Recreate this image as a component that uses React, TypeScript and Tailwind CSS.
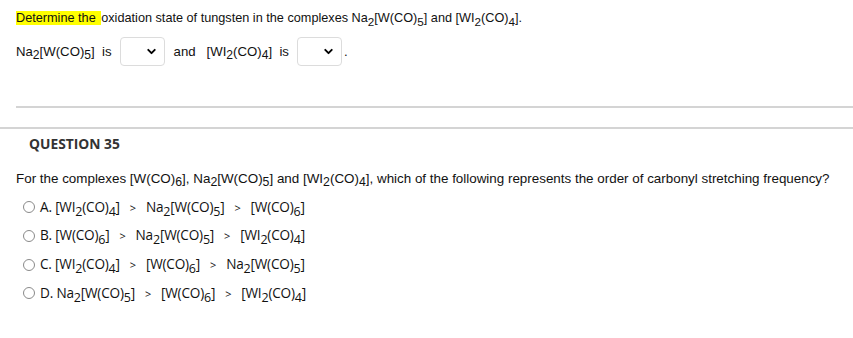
import type { ReactNode } from 'react';
import { ChevronDown } from 'lucide-react';

const arial = { fontFamily: '"Liberation Sans", Arial, sans-serif' };
const open = { fontFamily: '"Open Sans", sans-serif' };

function S({ children }: { children: ReactNode }) {
  return <span className="relative top-[0.3em] text-[0.92em]">{children}</span>;
}

function Sel() {
  return (
    <span className="ml-[8px] mr-[9px] inline-flex h-[29px] w-[45px] items-center justify-end rounded-[4px] border border-[#dcdcdc] bg-white pr-[6px] align-middle">
      <ChevronDown size={13} strokeWidth={3.5} className="text-black" />
    </span>
  );
}

const wi2 = <>[WI<S>2</S>(CO)<S>4</S>]</>;
const na2 = <>Na<S>2</S>[W(CO)<S>5</S>]</>;
const wco6 = <>[W(CO)<S>6</S>]</>;

const options = [
  ['A.', wi2, na2, wco6],
  ['B.', wco6, na2, wi2],
  ['C.', wi2, wco6, na2],
  ['D.', na2, wco6, wi2],
] as const;

export default function App() {
  return (
    <div className="h-[338px] w-[853px] overflow-hidden bg-white text-[#111]">
      <div className="pl-4 pt-[9px] text-[13.2px]" style={arial}>
        <p className="text-[12.7px] leading-[17px]">
          <span className="bg-[#ffff00] pr-[2px]">Determine the </span>oxidation state of tungsten in the complexes Na<S>2</S>[W(CO)<S>5</S>] and [WI<S>2</S>(CO)<S>4</S>].
        </p>
        <p className="mt-[10px] flex items-center whitespace-pre">
          <span>Na<S>2</S>[W(CO)<S>5</S>]  is</span>
          <Sel />
          <span>and   [WI<S>2</S>(CO)<S>4</S>]  is</span>
          <Sel />
          <span className="-ml-[7px]">.</span>
        </p>
      </div>
      <div className="ml-4 mt-[40px] h-[2px] bg-[#d4d4d4]" />
      <div className="mt-[19px] h-[2px] bg-[#d4d4d4]" />
      <div className="pl-[29px] pt-[5px] text-[13.8px] font-bold text-[#333]" style={open}>
        QUESTION 35
      </div>
      <p className="mt-[14px] pl-4 text-[13.4px]" style={arial}>
        For the complexes [W(CO)<S>6</S>], Na<S>2</S>[W(CO)<S>5</S>] and [WI<S>2</S>(CO)<S>4</S>], which of the following represents the order of carbonyl stretching frequency?
      </p>
      <div className="mt-[4px] flex flex-col pl-[23px] text-[13.6px] tracking-[-0.2px]" style={open}>
        {options.map(([l, a, b, c]) => (
          <div key={l} className="flex h-[28.7px] items-center whitespace-pre">
            <span className="mr-[5px] inline-block h-[12px] w-[12px] rounded-full border border-[#8a8a8a]" />
            <span>{l} {a}   <span className="text-[11px]">&gt;</span>   {b}   <span className="text-[11px]">&gt;</span>   {c}</span>
          </div>
        ))}
      </div>
    </div>
  );
}
